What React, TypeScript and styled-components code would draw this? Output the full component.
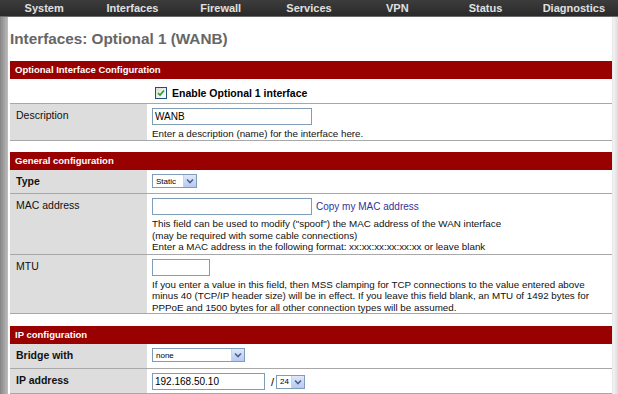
import React from 'react'
import styled, { createGlobalStyle } from 'styled-components'

const GlobalStyle = createGlobalStyle`
  html, body {
    margin: 0;
    padding: 0;
    background: #ffffff;
  }
  body {
    font-family: "Liberation Sans", Arial, sans-serif;
    color: #000;
  }
`

const Page = styled.div`
  width: 618px;
  height: 394px;
  overflow: hidden;
  display: flex;
  flex-direction: column;
`

const NavBar = styled.div`
  display: grid;
  grid-template-columns: repeat(7, 1fr);
  height: 16px;
  background: linear-gradient(#3c3c3c, #2a2a2a);
  border-bottom: 1px solid #6a6a6a;
  flex-shrink: 0;
`

const NavItem = styled.div`
  color: #e0e0e0;
  font-size: 11px;
  font-weight: bold;
  line-height: 16px;
  text-align: center;
`

const Body = styled.div`
  display: flex;
  flex: 1;
  min-height: 0;
`

const LeftEdge = styled.div`
  width: 8px;
  flex-shrink: 0;
  background: repeating-linear-gradient(to right, #b8b8b8 0, #d4d4d4 1px, #c4c4c4 2px),
    linear-gradient(to right, #aaa, #eee);
  background-blend-mode: multiply;
`

const RightEdge = styled.div`
  width: 5px;
  flex-shrink: 0;
  background: linear-gradient(to right, #f4f4f4, #dcdcdc);
  border-left: 1px solid #e8e8e8;
`

const Content = styled.div`
  flex: 1;
  padding: 0 0 0 2px;
  display: flex;
  flex-direction: column;
`

const Title = styled.div`
  color: #666666;
  font-size: 15.3px;
  font-weight: bold;
  height: 44px;
  line-height: 44px;
`

const SectionHeader = styled.div`
  background: #990000;
  color: #ffffff;
  font-size: 9.5px;
  font-weight: bold;
  height: 18px;
  line-height: 18px;
  padding-left: 5px;
`

const Spacer = styled.div`
  height: 12px;
`

const Row = styled.div<{ $h: number }>`
  display: grid;
  grid-template-columns: 137px 1fr;
  height: ${({ $h }) => $h}px;
  border-bottom: 1px solid #a8a8a8;
`

const Label = styled.div<{ $bold?: boolean; $plain?: boolean }>`
  background: ${({ $plain }) => ($plain ? '#ffffff' : '#dddddd')};
  font-size: 10.5px;
  font-weight: ${({ $bold }) => ($bold ? 'bold' : 'normal')};
  padding: 5px 0 0 6px;
  color: #111;
`

const Value = styled.div`
  padding: 4px 0 0 5px;
  display: flex;
  flex-direction: column;
  align-items: flex-start;
`

const Line = styled.div`
  display: flex;
  align-items: center;
  gap: 4px;
`

const TextInput = styled.div<{ $w: number }>`
  width: ${({ $w }) => $w}px;
  height: 17px;
  box-sizing: border-box;
  border: 1px solid #7f9db9;
  background: #fff;
  font-size: 10px;
  line-height: 15px;
  padding-left: 2px;
  color: #000;
`

const SelectBox = styled.div<{ $w: number }>`
  width: ${({ $w }) => $w}px;
  height: 14px;
  box-sizing: border-box;
  border: 1px solid #7f9db9;
  background: #fff;
  display: flex;
  align-items: center;
  justify-content: space-between;
  font-size: 8px;
  padding-left: 3px;
`

const SelectArrow = styled.div`
  width: 12px;
  height: 12px;
  background: linear-gradient(#dfe8fb, #b6c9f3);
  border-left: 1px solid #c3d3fd;
  display: flex;
  align-items: center;
  justify-content: center;
`

const Help = styled.div`
  font-size: 9.8px;
  line-height: 11.5px;
  color: #111;
  margin-top: 3px;
`

const Link = styled.span`
  color: #333399;
  font-size: 10px;
`

const CheckRow = styled.div`
  display: flex;
  align-items: center;
  gap: 5px;
  font-size: 10.5px;
  font-weight: bold;
  padding: 4px 0 0 3px;
`

const CheckBox = styled.div`
  width: 10px;
  height: 10px;
  border: 1px solid #1c5180;
  background: linear-gradient(135deg, #dcdcd7, #ffffff);
  display: flex;
  align-items: center;
  justify-content: center;
`

const Slash = styled.span`
  font-size: 11px;
  margin: 0 -2px 0 2px;
`

function Select({ w, value }: { w: number; value: string }) {
  return (
    <SelectBox $w={w}>
      <span>{value}</span>
      <SelectArrow>
        <svg width="8" height="6" viewBox="0 0 8 6">
          <path d="M1 1.5 L4 4.5 L7 1.5" stroke="#4d6185" strokeWidth="1.6" fill="none" />
        </svg>
      </SelectArrow>
    </SelectBox>
  )
}

const navItems = ['System', 'Interfaces', 'Firewall', 'Services', 'VPN', 'Status', 'Diagnostics']

export default function App() {
  return (
    <Page>
      <GlobalStyle />
      <NavBar>
        {navItems.map((n) => (
          <NavItem key={n}>{n}</NavItem>
        ))}
      </NavBar>
      <Body>
        <LeftEdge />
        <Content>
          <Title>Interfaces: Optional 1 (WANB)</Title>
          <SectionHeader>Optional Interface Configuration</SectionHeader>
          <Row $h={24}>
            <Label $plain />
            <Value>
              <CheckRow>
                <CheckBox>
                  <svg width="8" height="8" viewBox="0 0 8 8">
                    <path d="M1 4 L3 6 L7 1.5" stroke="#21a121" strokeWidth="1.6" fill="none" />
                  </svg>
                </CheckBox>
                Enable Optional 1 interface
              </CheckRow>
            </Value>
          </Row>
          <Row $h={36}>
            <Label>Description</Label>
            <Value>
              <TextInput $w={160}>WANB</TextInput>
              <Help>Enter a description (name) for the interface here.</Help>
            </Value>
          </Row>
          <Spacer />
          <SectionHeader>General configuration</SectionHeader>
          <Row $h={23}>
            <Label $bold>Type</Label>
            <Value>
              <Select w={45} value="Static" />
            </Value>
          </Row>
          <Row $h={60}>
            <Label>MAC address</Label>
            <Value>
              <Line>
                <TextInput $w={160} />
                <Link>Copy my MAC address</Link>
              </Line>
              <Help>
                This field can be used to modify ("spoof") the MAC address of the WAN interface
                <br />
                (may be required with some cable connections)
                <br />
                Enter a MAC address in the following format: xx:xx:xx:xx:xx:xx or leave blank
              </Help>
            </Value>
          </Row>
          <Row $h={59}>
            <Label>MTU</Label>
            <Value>
              <TextInput $w={58} />
              <Help>
                If you enter a value in this field, then MSS clamping for TCP connections to the value entered above
                <br />
                minus 40 (TCP/IP header size) will be in effect. If you leave this field blank, an MTU of 1492 bytes for
                <br />
                PPPoE and 1500 bytes for all other connection types will be assumed.
              </Help>
            </Value>
          </Row>
          <Spacer />
          <SectionHeader>IP configuration</SectionHeader>
          <Row $h={24}>
            <Label $bold>Bridge with</Label>
            <Value>
              <Select w={93} value="none" />
            </Value>
          </Row>
          <Row $h={24}>
            <Label $bold>IP address</Label>
            <Value>
              <Line>
                <TextInput $w={113}>192.168.50.10</TextInput>
                <Slash>/</Slash>
                <Select w={29} value="24" />
              </Line>
            </Value>
          </Row>
        </Content>
        <RightEdge />
      </Body>
    </Page>
  )
}
